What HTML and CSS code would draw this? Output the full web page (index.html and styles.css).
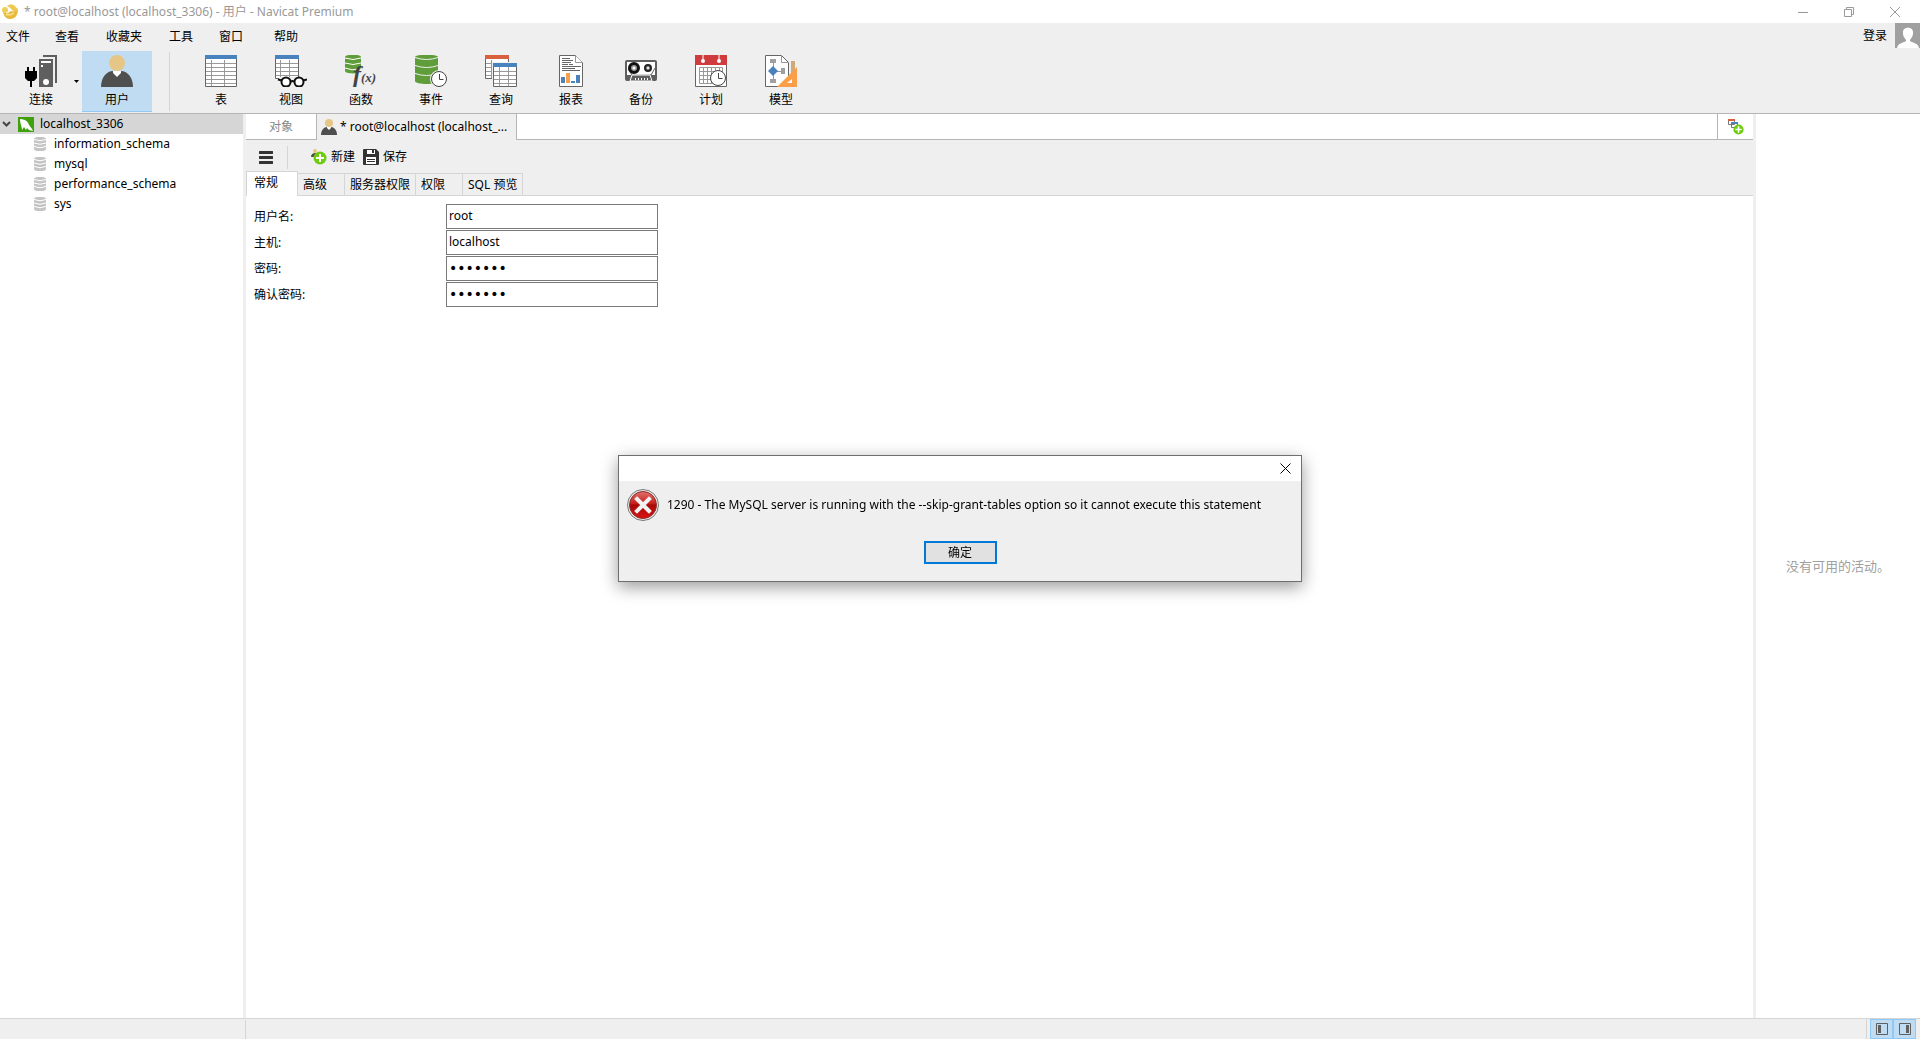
FILE: index.html
```
<!DOCTYPE html>
<html lang="zh-CN">

<head>
     <meta charset="utf-8">
     <title>* root@localhost (localhost_3306) - 用户 - Navicat Premium</title>
     <link rel="stylesheet" href="styles.css">
</head>

<body>
     <!-- shared icons -->
     <svg class="defs" width="0" height="0">
          <symbol id="user" viewBox="0 0 32 32">
               <path d="M0 32C0 22 6 16 12 16h8c6 0 12 6 12 16z" fill="#4f4f4f" />
               <path d="M12 16h8v2l-4 4-4-4z" fill="#fff" />
               <circle cx="16" cy="8" r="8" fill="#e6c686" />
          </symbol>
          <symbol id="db" viewBox="0 0 12 14">
               <path d="M0 2c0-3 12-3 12 0v10c0 3-12 3-12 0z" fill="#c4c4c4" />
               <path d="M0 2.500q6 2.500 12 0M0 6q6 2.500 12 0M0 9.500q6 2.500 12 0" fill="none" stroke="#fff" />
          </symbol>
          <symbol id="plus" viewBox="0 0 14 14">
               <circle cx="7" cy="7" r="6.500" fill="#6fcb10" />
               <path d="M7 3v8M3 7h8" stroke="#fff" stroke-width="2" />
          </symbol>
          <symbol id="clock" viewBox="0 0 16 16">
               <circle cx="8" cy="8" r="7.500" fill="#fff" stroke="#444" />
               <path d="M8.500 3v5.500h4" fill="none" stroke="#444" />
          </symbol>
     </svg>

     <div class="titlebar">
          <svg class="logo" width="16" height="16" viewBox="0 0 16 16">
               <path d="M1 8c3 2 6 1 8-1 3 1 5 0 7-2 0 5-2 10-8 10-4 0-6-3-7-7z" fill="#e6b93a" />
               <circle cx="3" cy="6" r="3" fill="#f0cd5c" />
               <path d="M5 2c2-2 6-2 8 0 1 2 3 2 3 4-2 2-4 2-6 0-1-2-3-3-5-4z" fill="#efc94f" />
               <path d="M4 10c2 1 5 1 8-1" fill="none" stroke="#f6dc84" stroke-width="2" />
          </svg>
          <span class="caption">* root@localhost (localhost_3306) - 用户 - Navicat Premium</span>
          <button class="winbtn" aria-label="最小化"><svg width="12" height="12"><path d="M1 6.500h10" /></svg></button>
          <button class="winbtn" aria-label="还原"><svg width="12" height="12"><path d="M1.500 3.500h7v7h-7zM3.500 3.500v-2h7v7h-2" /></svg></button>
          <button class="winbtn" aria-label="关闭"><svg width="12" height="12"><path d="M1 1l10 10M11 1L1 11" /></svg></button>
     </div>

     <div class="menubar">
          <div class="menu">
               <button>文件</button>
               <button>查看</button>
               <button>收藏夹</button>
               <button>工具</button>
               <button>窗口</button>
               <button>帮助</button>
          </div>
          <div class="account">
               <button>登录</button>
               <svg width="25" height="25" viewBox="0 0 25 25">
                    <path d="M0 0h25v25H0z" fill="#a0a0a0" />
                    <path d="M8 10c-1-7 11-7 10 0 0 4-2 5-3 7v1c3 2 8 2 9 7H2c1-5 6-5 9-7v-1c-1-2-3-3-3-7z" fill="#fff" />
               </svg>
          </div>
     </div>

     <div class="toolbar">
          <button class="tool">
               <svg width="32" height="32" viewBox="0 0 32 32">
                    <path d="M14 4h14v28H14z" fill="#5f5f5f" />
                    <path d="M18 0h14v28h-2V2H18z" fill="#5f5f5f" />
                    <path d="M16 6h10v2h-10zM16 10h2v2h-2z" fill="#fff" />
                    <circle cx="21" cy="27" r="3" fill="#fff" />
                    <path d="M2 12h2v4h4v-4h2v4h2v7l-3 3H7v6H5v-6H3l-3-3v-7h2z" fill="#000" />
               </svg>
               连接
          </button>
          <button class="arrow" aria-label="更多连接"><svg width="6" height="4"><path d="M0 0h5L2.500 3z" /></svg></button>
          <button class="tool on">
               <svg width="32" height="32"><use href="#user" /></svg>
               用户
          </button>
          <div class="sep"></div>
          <button class="tool">
               <svg width="32" height="32" viewBox="0 0 32 32">
                    <path d="M.5.5h31v31H.5z" fill="#fff" stroke="#666" />
                    <path d="M1 8.500h30M1 12.500h30M1 16.500h30M1 20.500h30M1 24.500h30M1 28.500h30M6.500 5v26M19.500 5v26" stroke="#999" />
                    <path d="M0 0h32v4H0z" fill="#4a82bd" />
               </svg>
               表
          </button>
          <button class="tool">
               <svg width="32" height="32" viewBox="0 0 32 32">
                    <path d="M.5.5h23v23H.5z" fill="#fff" stroke="#666" />
                    <path d="M1 8.500h22M1 12.500h22M1 16.500h22M1 20.500h22M5.500 5v18M14.500 5v18" stroke="#999" />
                    <path d="M0 0h24v4H0z" fill="#4a82bd" />
                    <path d="M4 22h27v4H4z" fill="#efefef" />
                    <circle cx="11" cy="27" r="4.500" fill="#fff" stroke="#111" stroke-width="2" />
                    <circle cx="24" cy="27" r="4.500" fill="#fff" stroke="#111" stroke-width="2" />
                    <path d="M16 27q1.500-2 3 0M3 24.500l4 1M28 25.500l4-1" fill="none" stroke="#111" stroke-width="2" />
               </svg>
               视图
          </button>
          <button class="tool">
               <svg width="32" height="32" viewBox="0 0 32 32">
                    <path d="M0 2c0-3 16-3 16 0v11l-4 5c-5 1-12 0-12-2z" fill="#5f9c3a" />
                    <path d="M0 3q8 3 16 0M0 8q8 3 16 0M0 13q7 3 14 1" fill="none" stroke="#fff" />
                    <text x="8" y="27" class="fx"><tspan class="big">f</tspan>(x)</text>
               </svg>
               函数
          </button>
          <button class="tool">
               <svg width="32" height="32" viewBox="0 0 32 32">
                    <path d="M0 2c0-3 23-3 23 0v24c0 4-23 4-23 0z" fill="#5f9c3a" />
                    <path d="M0 2.500q11.500 4 23 0M0 10.500q11.500 4 23 0M0 18.500q11.500 4 23 0" fill="none" stroke="#efefef" />
                    <circle cx="24" cy="24" r="9" fill="#efefef" />
                    <use href="#clock" x="16" y="16" width="16" height="16" />
               </svg>
               事件
          </button>
          <button class="tool">
               <svg width="32" height="32" viewBox="0 0 32 32">
                    <path d="M.5.5h23v23H.5z" fill="#fff" stroke="#666" />
                    <path d="M1 8.500h22M1 12.500h22M1 16.500h22M1 20.500h22M6.500 5v18" stroke="#999" />
                    <path d="M0 0h24v4H0z" fill="#d9603f" />
                    <path d="M7 7h25v25H7z" fill="#efefef" />
                    <path d="M8.500 8.500h23v23h-23z" fill="#fff" stroke="#666" />
                    <path d="M9 16.500h22M9 20.500h22M9 24.500h22M9 28.500h22M14.500 12v19M23.500 12v19" stroke="#999" />
                    <path d="M8 8h24v4H8z" fill="#4a82bd" />
               </svg>
               查询
          </button>
          <button class="tool">
               <svg width="32" height="32" viewBox="0 0 32 32">
                    <path d="M4.500.5h16l7 7v24h-23z" fill="#fff" stroke="#666" />
                    <path d="M20.500.5v7h7" fill="#fff" stroke="#999" />
                    <path d="M7 3.500h8M7 5.500h11M7 7.500h9M7 9.500h6M14 9.500h4M7 11.500h19M7 13.500h13M7 15.500h18" stroke="#666" />
                    <path d="M6 22h4v6H6zM16 26h4v2h-4zM21 20h4v8h-4z" fill="#4a82bd" />
                    <path d="M11 18h4v10h-4z" fill="#fa9f48" />
               </svg>
               报表
          </button>
          <button class="tool">
               <svg width="32" height="32" viewBox="0 0 32 32">
                    <rect y="5" width="32" height="21" rx="2" fill="#5f5f5f" />
                    <path d="M2 7h28v13H2z" fill="#fff" />
                    <path d="M3 14l4 6h19l4-7" fill="#fff" stroke="#5f5f5f" />
                    <circle cx="9" cy="13" r="4.500" fill="#999" stroke="#111" stroke-width="3" />
                    <circle cx="23" cy="13" r="3" fill="#999" stroke="#222" stroke-width="2" />
                    <circle cx="9" cy="13" r="1.500" fill="#fff" />
                    <circle cx="23" cy="13" r="1" fill="#fff" />
                    <path d="M7 20h18l2 6H5z" fill="#5f5f5f" stroke="#fff" />
                    <path d="M10 24h13" stroke="#fff" stroke-width="2" stroke-dasharray="1 2" />
               </svg>
               备份
          </button>
          <button class="tool">
               <svg width="32" height="32" viewBox="0 0 32 32">
                    <path d="M.5.5h31v31H.5z" fill="#fff" stroke="#666" />
                    <path d="M0 0h32v10H0z" fill="#cf3c3d" />
                    <path d="M8 0v5M24 0v5" stroke="#fff" />
                    <circle cx="8" cy="6" r="2" fill="#fff" />
                    <circle cx="24" cy="6" r="2" fill="#fff" />
                    <path d="M4.500 12.500h23v16h-23zM4.500 16.500h23M4.500 20.500h23M4.500 24.500h23M8.500 12v16M12.500 12v16M16.500 12v16M20.500 12v16M24.500 12v16" fill="none" stroke="#999" />
                    <use href="#clock" x="15" y="15" width="16" height="16" />
               </svg>
               计划
          </button>
          <button class="tool">
               <svg width="32" height="32" viewBox="0 0 32 32">
                    <path d="M.5.5h16l7 7v24H.5z" fill="#fff" stroke="#666" />
                    <path d="M16.500.5v7h7" fill="none" stroke="#999" />
                    <path d="M8.500 6v20M8 16.500h10" stroke="#999" />
                    <path d="M5 4h6v4H5zM5 24h6v4H5zM16 13h4v6h-4z" fill="#a0a0a0" />
                    <path d="M8 11l5 5-5 5-5-5z" fill="#4a82bd" />
                    <path d="M26 6h4v20h-4z" fill="#cfab78" />
                    <path d="M32 12v20H12z" fill="#fa9f48" />
                    <path d="M27 24v4h-5z" fill="#fff" />
               </svg>
               模型
          </button>
     </div>

     <div class="main">
          <ul class="tree">
               <li class="root">
                    <svg width="9" height="6" viewBox="0 0 9 6"><path d="M1 1l3.500 3.500L8 1" fill="none" stroke="#444" stroke-width="2" /></svg>
                    <svg class="conn" width="16" height="15" viewBox="0 0 16 15">
                         <path d="M0 0h16v15H0z" fill="#3fa10c" />
                         <path d="M2 2c4 0 8 2 9 6l3 4 1 2-4-1-2-2-1 2-2-3-2 3c0-4-2-5-2-12z" fill="#fff" />
                    </svg>
                    localhost_3306
               </li>
               <li><svg width="12" height="14"><use href="#db" /></svg>information_schema</li>
               <li><svg width="12" height="14"><use href="#db" /></svg>mysql</li>
               <li><svg width="12" height="14"><use href="#db" /></svg>performance_schema</li>
               <li><svg width="12" height="14"><use href="#db" /></svg>sys</li>
          </ul>

          <div class="center">
               <div class="tabs">
                    <button class="objects">对象</button>
                    <button class="doc"><svg width="16" height="16"><use href="#user" /></svg><span>* root@localhost (localhost_...</span></button>
                    <div class="fill"></div>
                    <button class="newquery" aria-label="新建查询">
                         <svg width="16" height="16" viewBox="0 0 16 16">
                              <path d="M.5.5h6v5h-6zM3.500 3.500h6v5h-6z" fill="#fff" stroke="#777" />
                              <path d="M0 0h7v2H0z" fill="#d9603f" />
                              <path d="M3 3h7v2H3z" fill="#4a82bd" />
                              <use href="#plus" x="5" y="5" width="11" height="11" />
                         </svg>
                    </button>
               </div>

               <div class="actions">
                    <button class="burger" aria-label="菜单"><svg width="14" height="13"><path d="M1 1.500h12M1 6.500h12M1 11.500h12" stroke="#333" stroke-width="3" stroke-linecap="round" /></svg></button>
                    <button>
                         <svg width="16" height="16" viewBox="0 0 16 16">
                              <path d="M0 8c0-3 2-4 4-4s3 1 3 4z" fill="#4f4f4f" />
                              <circle cx="4" cy="2" r="2" fill="#e6c686" />
                              <use href="#plus" x="2" y="2" width="14" height="14" />
                         </svg>
                         新建
                    </button>
                    <button>
                         <svg width="16" height="16" viewBox="0 0 16 16">
                              <path d="M0 1q0-1 1-1h12l3 3v12q0 1-1 1H1q-1 0-1-1z" fill="#333" />
                              <path d="M4 1h8v4H4zM3 8h10v7H3z" fill="#fff" />
                              <path d="M9 1h2v3H9z" fill="#333" />
                              <path d="M4 10.500h8M4 12.500h8" stroke="#333" />
                         </svg>
                         保存
                    </button>
               </div>

               <div class="pages">
                    <button class="on">常规</button>
                    <button>高级</button>
                    <button class="fit">服务器权限</button>
                    <button>权限</button>
                    <button class="fit">SQL 预览</button>
               </div>

               <form class="form">
                    <label for="name">用户名:</label><input id="name" type="text" value="root">
                    <label for="host">主机:</label><input id="host" type="text" value="localhost">
                    <label for="pwd">密码:</label><input id="pwd" type="password" value="1234567">
                    <label for="pwd2">确认密码:</label><input id="pwd2" type="password" value="1234567">
               </form>
          </div>

          <div class="activity">没有可用的活动。</div>
     </div>

     <div class="status">
          <div class="left"></div>
          <div class="right">
               <button aria-label="左侧窗格"><svg width="12" height="12"><path d="M.5.5h11v11H.5z" /><path class="bar" d="M2 2h3v8H2z" /></svg></button>
               <button aria-label="右侧窗格"><svg width="12" height="12"><path d="M.5.5h11v11H.5z" /><path class="bar" d="M7 2h3v8H7z" /></svg></button>
          </div>
     </div>

     <div class="overlay">
          <div class="dialog" role="alertdialog">
               <div class="head">
                    <button aria-label="关闭"><svg width="11" height="11"><path d="M.5.5l10 10M10.500.5l-10 10" stroke="#000" /></svg></button>
               </div>
               <div class="message">
                    <svg width="32" height="32" viewBox="0 0 32 32">
                         <defs>
                              <linearGradient id="red" x2="0" y2="1">
                                   <stop offset="0" stop-color="#e2726e" />
                                   <stop offset=".45" stop-color="#c5201c" />
                                   <stop offset=".5" stop-color="#a40807" />
                                   <stop offset="1" stop-color="#dc1512" />
                              </linearGradient>
                         </defs>
                         <circle cx="16" cy="16" r="15.500" fill="#eee" stroke="#777" />
                         <circle cx="16" cy="16" r="13.500" fill="url(#red)" stroke="#8f2b2a" />
                         <path d="M10 10l12 12M22 10L10 22" stroke="#f2f2f2" stroke-width="4" stroke-linecap="square" />
                    </svg>
                    <span>1290 - The MySQL server is running with the --skip-grant-tables option so it cannot execute this statement</span>
               </div>
               <button class="ok">确定</button>
          </div>
     </div>
</body>

</html>
```
FILE: styles.css
```
* {
     box-sizing: border-box;
}

body {
     margin: 0;
     height: 100vh;
     display: flex;
     flex-direction: column;
     background-color: #efefef;
     color: #000;
     font-family: "Noto Sans", "Noto Sans CJK SC", sans-serif;
     font-size: 12px;
     line-height: 16px;
     overflow: hidden;
}

button {
     border: 0;
     padding: 0;
     background: none;
     color: inherit;
     font: inherit;
     white-space: nowrap;
}

svg {
     display: block;
     flex: none;
}

.defs {
     position: absolute;
}

/* title bar */
.titlebar {
     display: flex;
     align-items: center;
     height: 23px;
     padding: 0 2px;
     background-color: #fff;
     color: #999;
}

.caption {
     flex: 1;
     padding-left: 6px;
}

.winbtn {
     width: 46px;
     height: 20px;
     display: flex;
     justify-content: center;
     align-items: center;
}

.winbtn path {
     fill: none;
     stroke: #999;
}

/* menu */
.menubar {
     display: flex;
     justify-content: space-between;
     height: 28px;
}

.menu {
     display: grid;
     grid-template-columns: 49px 51px 63px 50px 55px 50px;
     padding-left: 6px;
}

.menu button {
     text-align: left;
}

.account {
     display: flex;
     align-items: flex-start;
     gap: 8px;
}

.account button {
     height: 25px;
}

/* main toolbar */
.toolbar {
     display: flex;
     height: 63px;
     padding-left: 6px;
     padding-bottom: 1px;
     border-bottom: 1px solid #b5b5b5;
}

.tool {
     width: 70px;
     padding-top: 4px;
     display: flex;
     flex-direction: column;
     align-items: center;
     gap: 5px;
}

.tool.on {
     background-color: #c0dcf3;
     border-bottom: 1px solid #90c8f6;
}

.arrow {
     width: 8px;
     margin-left: -2px;
}

.sep {
     border-left: 1px solid #d5d5d5;
     margin: 1px 16px 1px 17px;
}

.fx {
     font: italic bold 13px "Liberation Serif", serif;
     fill: #444;
}

.fx .big {
     font-size: 24px;
}

/* body */
.main {
     flex: 1;
     display: flex;
     gap: 3px;
     min-height: 0;
}

.tree {
     width: 243px;
     margin: 0;
     padding: 0;
     list-style: none;
     background-color: #fff;
}

.tree li {
     display: flex;
     align-items: center;
     gap: 8px;
     height: 20px;
     padding-left: 34px;
}

.tree .root {
     padding-left: 2px;
     gap: 6px;
     background-color: #d6d6d6;
}

.conn {
     margin-left: 1px;
}

.center {
     flex: 1;
     display: flex;
     flex-direction: column;
     min-width: 0;
}

.tabs {
     display: flex;
     height: 26px;
}

.objects,
.fill,
.newquery {
     background-color: #fff;
     border-bottom: 1px solid #b5b5b5;
}

.objects {
     width: 71px;
     border-right: 1px solid #b5b5b5;
     color: #888;
}

.doc {
     width: 200px;
     display: flex;
     align-items: center;
     gap: 3px;
     padding-left: 4px;
     border-right: 1px solid #b5b5b5;
}

.fill {
     flex: 1;
}

.newquery {
     width: 36px;
     display: flex;
     align-items: center;
     justify-content: center;
     border-left: 1px solid #b5b5b5;
}

.actions {
     display: flex;
     align-items: center;
     gap: 8px;
     height: 31px;
     padding: 3px 0 0 13px;
}

.actions button {
     display: flex;
     align-items: center;
     gap: 4px;
}

.actions .burger {
     height: 23px;
     padding-right: 14px;
     margin-right: 15px;
     border-right: 1px solid #d5d5d5;
}

/* property pages */
.pages {
     display: flex;
     align-items: flex-end;
     height: 25px;
     box-shadow: inset 0 -1px #d5d5d5;
}

.pages button {
     width: 47px;
     height: 23px;
     padding-left: 5px;
     text-align: left;
     border: 1px solid #d5d5d5;
     border-left: 0;
}

.pages .on {
     width: 52px;
     height: 25px;
     padding: 0 0 3px 7px;
     background-color: #fff;
     border-left: 1px solid #d5d5d5;
     border-bottom: 0;
}

.pages .fit {
     width: auto;
     padding-right: 5px;
}

.form {
     flex: 1;
     display: grid;
     grid-template-columns: 192px 212px;
     grid-auto-rows: 25px;
     gap: 1px 0;
     padding: 8px;
     background-color: #fff;
}

.form label {
     line-height: 25px;
}

.form input {
     border: 1px solid #7a7a7a;
     padding: 0 2px 2px;
     background-color: #fff;
     color: #000;
     font: inherit;
     outline: 0;
}

.form input[type="password"] {
     font-family: "DejaVu Sans", sans-serif;
     font-size: 14px;
}

.activity {
     width: 164px;
     display: flex;
     align-items: center;
     justify-content: center;
     background-color: #fff;
     color: #a0a0a0;
     font-size: 13px;
}

/* status bar */
.status {
     display: flex;
     justify-content: space-between;
     height: 21px;
     border-top: 1px solid #d5d5d5;
}

.left {
     width: 246px;
     margin-top: 1px;
     border-right: 1px solid #d5d5d5;
}

.right {
     display: flex;
     padding: 0 4px 0 3px;
     border-left: 1px solid #d5d5d5;
}

.right button {
     width: 23px;
     display: flex;
     align-items: center;
     justify-content: center;
     background-color: #c0dcf3;
     border: 1px solid #90c8f6;
}

.right path {
     fill: none;
     stroke: #5f5f5f;
}

.right .bar {
     fill: #5f5f5f;
     stroke: none;
}

/* error dialog */
.overlay {
     position: fixed;
     inset: 0 0 2px;
     display: flex;
     align-items: center;
     justify-content: center;
}

.dialog {
     width: 684px;
     display: flex;
     flex-direction: column;
     align-items: center;
     background-color: #efefef;
     border: 1px solid #6e6e6e;
     box-shadow: 0 5px 16px rgba(0, 0, 0, .4);
     padding-bottom: 17px;
}

.head {
     align-self: stretch;
     display: flex;
     justify-content: flex-end;
     align-items: center;
     height: 25px;
     padding-right: 10px;
     background-color: #fff;
}

.message {
     align-self: stretch;
     display: flex;
     align-items: center;
     gap: 8px;
     padding: 8px 8px 20px;
     white-space: nowrap;
}

.ok {
     width: 73px;
     height: 23px;
     background-color: #e1e1e1;
     border: 2px solid #0078d7;
}
```
